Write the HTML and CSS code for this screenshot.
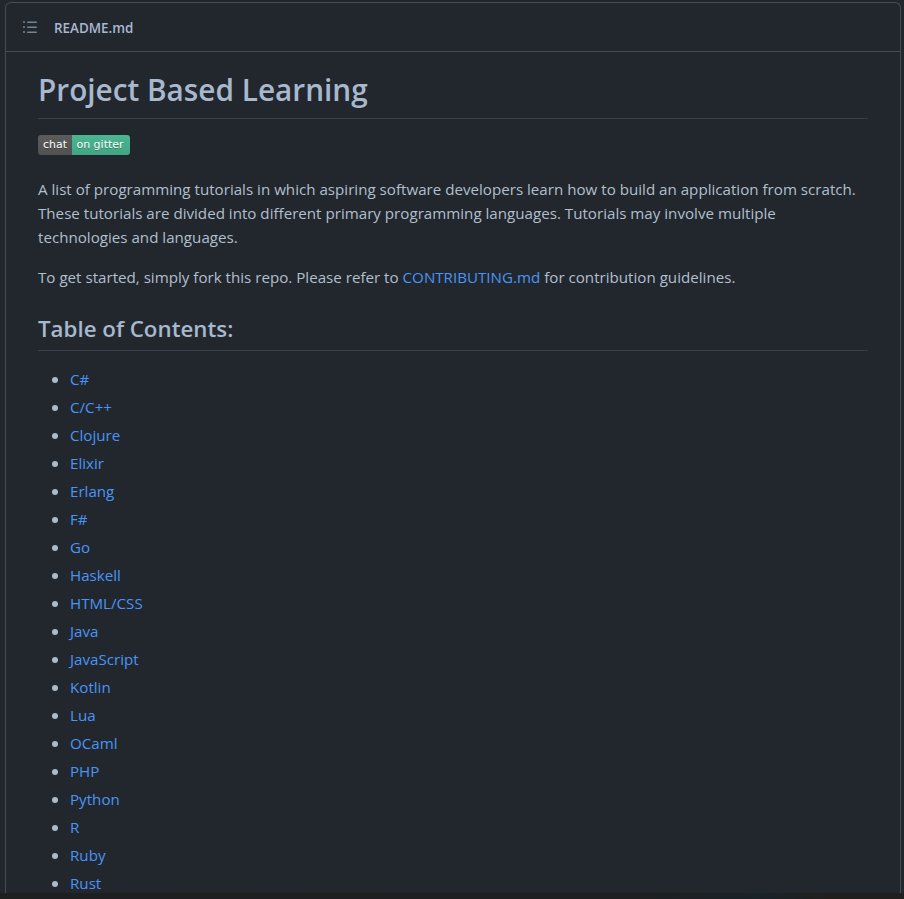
FILE: index.html
```html
<!DOCTYPE html>
<html lang="en">
<head>
<meta charset="utf-8">
<title>README.md</title>
<link rel="stylesheet" href="styles.css">
</head>
<body>
<div class="viewport">
  <section class="card">
    <header class="card-head">
      <svg class="list-icon" viewBox="0 0 16 16" width="16" height="16" aria-hidden="true"><path fill-rule="evenodd" d="M2 4a1 1 0 100-2 1 1 0 000 2zm3.75-1.5a.75.75 0 000 1.5h8.5a.75.75 0 000-1.5h-8.5zm0 5a.75.75 0 000 1.5h8.5a.75.75 0 000-1.5h-8.5zm0 5a.75.75 0 000 1.5h8.5a.75.75 0 000-1.5h-8.5zM3 8a1 1 0 11-2 0 1 1 0 012 0zm-1 6a1 1 0 100-2 1 1 0 000 2z"/></svg>
      <span class="file-name">README.md</span>
    </header>
    <article class="readme">
      <h1>Project Based Learning</h1>
      <p class="badge-row"><span class="badge"><span class="badge-l">chat</span><span class="badge-r">on gitter</span></span></p>
      <p>A list of programming tutorials in which aspiring software developers learn how to build an application from scratch. These tutorials are divided into different primary programming languages. Tutorials may involve multiple technologies and languages.</p>
      <p>To get started, simply fork this repo. Please refer to <a href="#">CONTRIBUTING.md</a> for contribution guidelines.</p>
      <h2>Table of Contents:</h2>
      <ul>
        <li><a href="#">C#</a></li>
        <li><a href="#">C/C++</a></li>
        <li><a href="#">Clojure</a></li>
        <li><a href="#">Elixir</a></li>
        <li><a href="#">Erlang</a></li>
        <li><a href="#">F#</a></li>
        <li><a href="#">Go</a></li>
        <li><a href="#">Haskell</a></li>
        <li><a href="#">HTML/CSS</a></li>
        <li><a href="#">Java</a></li>
        <li><a href="#">JavaScript</a></li>
        <li><a href="#">Kotlin</a></li>
        <li><a href="#">Lua</a></li>
        <li><a href="#">OCaml</a></li>
        <li><a href="#">PHP</a></li>
        <li><a href="#">Python</a></li>
        <li><a href="#">R</a></li>
        <li><a href="#">Ruby</a></li>
        <li><a href="#">Rust</a></li>
      </ul>
    </article>
  </section>
</div>
<div class="bottom-strip"></div>
</body>
</html>
```
FILE: styles.css
```css
html, body {
  margin: 0;
  height: 100%;
  overflow: hidden;
  background: #22272e;
}
body {
  display: flex;
  flex-direction: column;
  font-family: "Open Sans", "Noto Sans", sans-serif;
  color: #b1bfcc;
  font-size: 15.15px;
  line-height: 24px;
}
.viewport {
  flex: 1;
  min-height: 0;
  overflow: hidden;
  padding: 2px 3px 0 5px;
}
.bottom-strip {
  height: 6px;
  flex: none;
  background: linear-gradient(90deg, #1e1f1f 0%, #1e1f20 70%, #1a2329 84%, #211f1c 92%, #201f1d 100%);
}
.card {
  border: 1px solid #444c56;
  border-bottom: 0;
  border-radius: 6px 6px 0 0;
  height: 100%;
  box-sizing: border-box;
  overflow: hidden;
}
.card-head {
  height: 48px;
  display: flex;
  align-items: center;
  border-bottom: 1px solid #444c56;
  padding-left: 16px;
}
.list-icon {
  fill: #768390;
  margin-right: 16px;
  flex: none;
}
.file-name {
  font-size: 13.4px;
  font-weight: 600;
  color: #a8b8cd;
  padding-top: 2px;
}
.readme {
  padding: 18px 32px 16px;
}
h1 {
  margin: 0 0 16px;
  font-size: 29.75px;
  line-height: 40px;
  font-weight: 600;
  color: #a8b8cd;
  padding-bottom: 8px;
  border-bottom: 1px solid #373e47;
}
.badge-row {
  margin: 0 0 16px;
  height: 26px;
  display: flex;
  align-items: flex-start;
}
.badge {
  display: inline-flex;
  height: 20px;
  border-radius: 3px;
  overflow: hidden;
  font-family: "DejaVu Sans", sans-serif;
  font-size: 11px;
  line-height: 20px;
  color: #fff;
  text-shadow: 0 1px 0 rgba(1, 1, 1, 0.3);
}
.badge-l {
  width: 34px;
  text-align: center;
  background: linear-gradient(#5b5b5b, #515151);
}
.badge-r {
  width: 58px;
  box-sizing: border-box;
  padding-right: 2px;
  text-align: center;
  background: linear-gradient(#4bb592, #42a583);
}
p {
  margin: 0 0 16px;
}
a {
  color: #4a94f6;
  text-decoration: none;
}
h2 {
  margin: 25px 0 16px;
  font-size: 22.3px;
  line-height: 30px;
  font-weight: 600;
  color: #a8b8cd;
  padding-bottom: 6px;
  border-bottom: 1px solid #373e47;
}
ul {
  margin: 0;
  padding-left: 32px;
  list-style: none;
}
li {
  margin-top: 4px;
  display: flex;
  align-items: center;
}
li::before {
  content: "";
  flex: none;
  width: 6px;
  height: 6px;
  margin: 2px 12px 0 -18px;
  border-radius: 50%;
  background: #adbac7;
}
```
